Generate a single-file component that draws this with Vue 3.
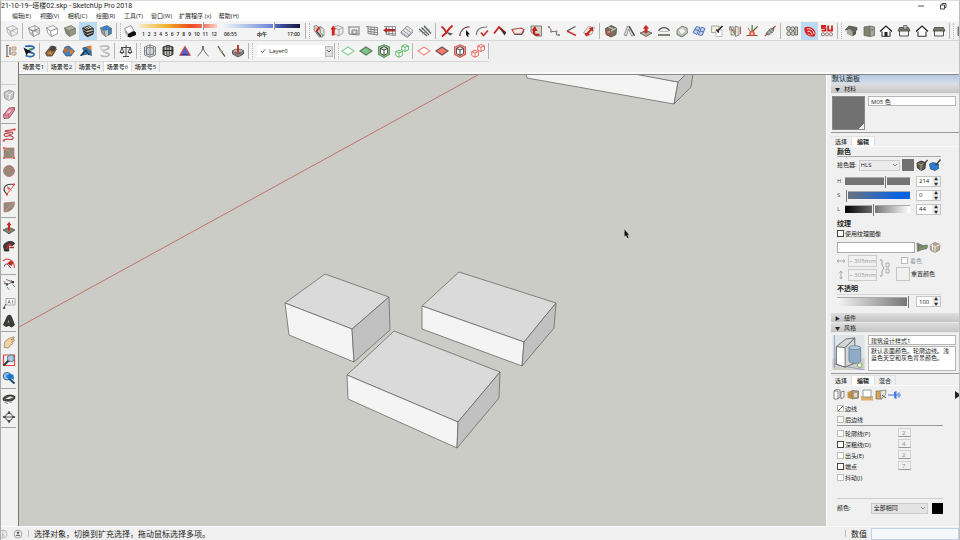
<script setup>
import { ref } from 'vue'

const cube = (top, left, right, line, extra = '') =>
  `<g stroke="${line}" stroke-width=".8" stroke-linejoin="round"><path d="M1.5 4 8 1.5 12.5 4.5 5.5 7z" fill="${top}"/><path d="M1.5 4 5.5 7 6.5 12.5 3 9.5z" fill="${left}"/><path d="M5.5 7 12.5 4.5 12.3 9.8 6.5 12.5z" fill="${right}"/></g>${extra}`
const hexBox = (edge, fill, halo) =>
  `<path d="M7 .8 12.4 3.2V10.4L7 13.2 1.6 10.4V3.2z" fill="${fill}" stroke="${halo}" stroke-width="1.2"/><path d="M7 2.6 10.6 4.4V9.4L7 11.4 3.4 9.4V4.4zM3.4 4.4 7 6.2 10.6 4.4M7 6.2V11.4" fill="#fff" stroke="${edge}"/>`
const diamond = (fill, line) =>
  `<path d="M1 7 7 3 13 7 7 11z" fill="${fill}" stroke="${line}" stroke-width="1.2"/>`
const twin = (c) =>
  `<g fill="#fff" stroke="${c}" stroke-width=".9"><path d="M10 .6 13.4 2V6L10 7.4 6.8 6V2zM6.8 2 10 3.4 13.4 2M10 3.4V7.4"/><path d="M4 6.2 7.4 7.6V11.6L4 13.2.8 11.6V7.6zM.8 7.6 4 9 7.4 7.6M4 9V13.2"/></g>`
const house = (roof, wall, door) =>
  `<path d="M3 6V12.3H11V6" fill="${wall}" stroke="#333" stroke-width="1.1"/><path d="M1 7.4 7 2 13 7.4" fill="${roof}" stroke="#222" stroke-width="1.3"/>${door ? '<path d="M5.5 8H8.5V12.5H5.5z" fill="#222"/>' : ''}`
const shed = (extra = '') =>
  `<path d="M2.5 6.5H11.5V12H2.5z" fill="#f4f4f0" stroke="#555"/><path d="M1 7 2.5 3.5H11.5L13 7z" fill="#77776c" stroke="#44443e" stroke-width=".8"/>${extra}`

const icons = {
  xray: cube('#f4f4f4', '#e8e8e8', '#eee', '#a8a8a8', '<path d="M3 9.5 8 7 12.3 9.8M8 1.5V7" fill="none" stroke="#bbb" stroke-width=".6"/>'),
  wire: cube('#f5f5f5', '#eee', '#f5f5f5', '#888', '<path d="M3 9.5 8 7 12.3 9.8M8 1.5V7M3 6 12 7" fill="none" stroke="#888" stroke-width=".7"/>'),
  hidden: cube('#fff', '#fff', '#fff', '#888'),
  shaded: cube('#aeb0a0', '#85877a', '#969886', '#777869'),
  textured: '<path d="M1.5 4 8 1.5 12.5 4.5 12.3 9.8 6.5 12.5 3 9.5z" fill="#d8d3bd" stroke="#3a3a36" stroke-width=".8"/><path d="M2 4.2 5.5 6.5 12.3 4.5M2.6 7 6 9.3 12.3 7.2M3.4 9.8 6.5 12 12 9.8" fill="none" stroke="#2b2b28" stroke-width="1.6"/><path d="M4 3.2 7.5 5.4M6 2.3 9.5 4.8" stroke="#4b4b44"/>',
  mono: cube('#2c88d8', '#9c9c90', '#3f7fb9', '#5f6f7c', '<path d="M5.5 7 9 5.8 9 11.3 6.5 12.5z" fill="#c9c3ac"/>'),
  shadow: '<path d="M1.5 4.5 8 1.5 11 7 5 10z" fill="#fff" stroke="#777" stroke-width=".8"/><path d="M5 10 11 7 13 8.5V11L7 13.4 4.4 12.4z" fill="#111"/><path d="M1.5 4.5 5 10 4.6 12 2 9z" fill="#aaa"/>',
  wallRed: '<path d="M2 2 5 1.5 11 10 10.5 13H7L2 6z" fill="#cfcabd" stroke="#777" stroke-width=".7"/><path d="M8 2 12 5V12L8.500 9z" fill="#e4e1d8" stroke="#777" stroke-width=".7"/><path d="M7.500 3 4 8" stroke="#c81f1b" stroke-width="1.8"/><path d="M5 8 9 12.500" stroke="#444" stroke-width="1.300"/>',
  pushWall: '<path d="M4 3 8 1.5 13 3.5V9L9 12 4 9.5z" fill="#ececec" stroke="#888" stroke-width=".7"/><path d="M9 5.5V12M4 4 9 5.5 13 3.5" fill="none" stroke="#888" stroke-width=".7"/><path d="M3.2 1.5 6 5.5H4.6V11.5H1.8V5.5H.4z" fill="#d92520"/>',
  frame: '<path d="M1 3H13M2 3V10L12 11V4M5 6H10V10H5z" fill="none" stroke="#777"/><path d="M6 7H9V9H6z" fill="#fff" stroke="#999" stroke-width=".6"/>',
  grid: '<path d="M1 2.5 12.5 3.5V11L3 9.5V2.5M3 5 12.5 6M3 7.4 12.5 8.6M6 3V10M9.3 3.2V10.6" fill="none" stroke="#777" stroke-width=".9"/>',
  redRows: '<path d="M1 2.5H12.5V11.5L3 10.5V2.5M3 9 12 10M6 3V11M9.5 3V11" fill="none" stroke="#888" stroke-width=".9"/><path d="M4 5H12V7.5H4z" fill="#b02a28"/><path d="M0 6.2 4 3.5V9z" fill="#b02a28"/>',
  stack: '<path d="M1 8 7 2 13 6.5 7.5 12.5z" fill="#e5e5e8" stroke="#888" stroke-width=".8"/><path d="M3 6.5 9 11M5 4.3 11 8.7" stroke="#9b9ba4"/><path d="M1 8V9.5L7.5 13.5 13 8" fill="none" stroke="#77779a" stroke-width=".8"/>',
  hatch: '<path d="M1 5 9 12M3.5 3.5 11 11M6 1.8 13 9.5" stroke="#5c6061" stroke-width="1.3"/><path d="M1.5 8 8 2.5M4 10.5 11.5 5" stroke="#8d9192"/>',
  cutRed: '<path d="M1.5 2.5C4 4 5.5 6.5 6.5 8.5 8 6 10 3.5 12.5 1.5M2 12.5 6.5 8.5" fill="none" stroke="#c8201c" stroke-width="1.8"/><path d="M6 8 13 9.5 10 11.5z" fill="#555"/>',
  arcDot: '<path d="M1.5 11C3 6.5 6 3 10.5 3" fill="none" stroke="#555" stroke-width="1.1"/><path d="M9 2H11.5V4H9zM1 10H3V12H1z" fill="#b77"/><path d="M8 6 12 10.3 10 10.5 10.6 12.8 9.6 13 8.8 11 8 12z" fill="#111"/>',
  arcCheck: '<path d="M1.5 11C1 6.5 4 3 12 3" fill="none" stroke="#777" stroke-width="1.1"/><path d="M6 8.5 8.5 11.5 13 6.5" fill="none" stroke="#c8302c" stroke-width="1.7"/>',
  roof: '<path d="M1 9.5 6 3 12.8 9" fill="none" stroke="#c8201c" stroke-width="1.8"/><path d="M6 3.5 11.5 11.5 13 9z" fill="#333"/><path d="M3 10 6 6 9 11z" fill="#f8f8f8"/>',
  slab: '<path d="M1 5.5 10 4 13 5.5 10.5 10H3.5z" fill="#f3e9e2" stroke="#b44741" stroke-width="1.2"/><path d="M3.5 10.5H11L13 7" fill="none" stroke="#555"/>',
  bendRed: '<path d="M2 2H12.5V12H7L2 8z" fill="#d6d2c4" stroke="#666" stroke-width=".8"/><path d="M10.5 10.5C5 12 4 9 5.5 5.5" fill="none" stroke="#c4201b" stroke-width="2.2"/><path d="M2.5 6.5 6 2 8.5 7z" fill="#c4201b"/>',
  steps: '<path d="M2 3 4 5.5V7.5H9.5V11H13" fill="none" stroke="#777"/><path d="M1 2H3V4H1zM3 6.4H5V8.4H3zM8.5 6.4H10.5V8.4H8.5zM11 10H13V12H11z" fill="#a88"/>',
  angle: '<path d="M11.5 2.5 3 7" stroke="#555" stroke-width="1.3"/><path d="M3 7 12 11.5" stroke="#c33" stroke-width="1.4"/>',
  foldRed: '<path d="M1.5 9 6 2.5 12.5 3.5 10 10 5 12z" fill="#e9dfd4" stroke="#999" stroke-width=".7"/><path d="M11 3 7 4 8 5.5 4.5 9 2.5 9 4 12.5 8 10.5 6.8 9.5 9.5 6.5 11 7.5z" fill="#c92a22"/>',
  brownBox: '<path d="M1.5 4.5 7 1.5 12.5 4 12 10.5 7 13 2 10.5z" fill="#777468" stroke="#44423b" stroke-width=".8"/><path d="M2 5 7 7V13L2 10.5z" fill="#a35650"/><path d="M4 2.5 10 5.5M7 7 12.5 4M3.5 8H6" stroke="#ded8c8"/>',
  blades: '<path d="M2 11 5.5 2 8 2.5 12.5 11.5 9.5 12 6.5 5 4.5 12z" fill="#d8d8d8" stroke="#777" stroke-width=".7"/><path d="M7 2.5 12.5 11.5" stroke="#444" stroke-width="1.3"/>',
  pushRed: '<path d="M1 9 7 6.5 13 9 7 12.5z" fill="#aeaa9b" stroke="#55534b" stroke-width=".8"/><path d="M7 1 10.2 4.5H8.5V9H5.5V4.5H3.8z" fill="#cc2822"/>',
  arch: '<path d="M1.5 7C4 2.5 10 2.5 12.5 7M1 11H13" fill="none" stroke="#5c5c55" stroke-width="1.4"/><path d="M3 7.5H11" stroke="#bbb"/>',
  rounded: '<path d="M2 6 7 2 12 4 12.5 9 7 13 2 10.5z" fill="#bfc4bd" stroke="#75776f" stroke-width=".9"/><path d="M4 6 8 4 10 8 6 10z" fill="#f4f4f0"/><path d="M3 11 7 12.6 11 10" stroke="#758c75" fill="none"/>',
  panels: '<path d="M1 8.5 4.5 2.5 8 3.5 4.8 10.5zM6.2 10.8 9.5 3.2 13 4.5 10 11.5z" fill="#bed1ee" stroke="#476aa7" stroke-width=".9"/><path d="M3 5.5 6.5 6.5M8 7 11.6 8" stroke="#476aa7"/>',
  copyPick: '<path d="M1.5 2H9V8.5H1.5z" fill="#ededdf" stroke="#888" stroke-width=".7"/><path d="M6 6H12V12.5H6z" fill="#fff" stroke="#aaa" stroke-width=".7"/><path d="M12.5 2 8 6.5M6.5 5.5 8.8 8.5" stroke="#222" stroke-width="1.6"/><path d="M9.5 4.5 8 6" stroke="#c33"/>',
  blocks: '<path d="M1.5 3H6V6H1.5zM7.5 2 11 3.5V11L7.5 12.5zM3 6.5H6.5V11H3z" fill="#e4e0d8" stroke="#7a776f" stroke-width=".8"/><path d="M12.5 2.5V10M2 2 6 9" stroke="#a6665e"/>',
  axes: '<path d="M7 8 7.2 1" stroke="#3a9c40" stroke-width="1.4"/><path d="M7 8 12.5 2.5M1.5 11.5H12.5" stroke="#7b4b3f" stroke-width="1.1"/><circle cx="7" cy="9.5" r="2.8" fill="#dc5a42"/><path d="M3 4 6 8.5" stroke="#c66"/><circle cx="7" cy="9.5" r="1.2" fill="#f3c9b7"/>',
  screw: '<path d="M2 12 12.5 2" stroke="#b34b47" stroke-width="1.2"/><path d="M3 9.5 7 5 11 4 10 8 5.5 11z" fill="#8f8f8b" stroke="#5a5a55" stroke-width=".8"/><path d="M5 7.5 8 10M7 5.5 10 8" stroke="#ddd" stroke-width=".7"/>',
  spheres: '<g fill="#cfcfcb" stroke="#66665f" stroke-width=".9"><circle cx="3.5" cy="4.5" r="2"/><circle cx="3.8" cy="9.5" r="2"/><circle cx="7.6" cy="4.8" r="2"/><circle cx="7.8" cy="9.5" r="2"/><path d="M10 3H12.5V11H10z"/></g>',
  rss: '<path d="M1.500 3.500C6 1 12.500 4.500 12.500 9.500L11.500 12.500 7.500 12.500C3 11.500 1 8 1.500 3.500z" fill="#d42320"/><path d="M4 5C8 4 11 7 11 10M4.5 7.3C7 7 9 8.5 9 11M5 9.5 7 11.5" fill="none" stroke="#fff" stroke-width=".9"/>',
  plugin: '<path d="M6 2H2V4.2H5.5V6.6H1.5M8.2 1.5V6.5H12V1.5" fill="none" stroke="#c9221e" stroke-width="1.8"/><g fill="#eee" stroke="#8f6d6a" stroke-width=".9"><circle cx="3" cy="10.3" r="1.6"/><circle cx="7" cy="10.3" r="1.6"/><circle cx="11" cy="10.3" r="1.6"/></g>',
  iso: '<path d="M1 6 5 2 12.8 3.5 13 6 8.5 7.5 6 5z" fill="#66665f" stroke="#444" stroke-width=".7"/><path d="M2.5 6.5 6 5 8.5 8V12.5L3 10z" fill="#a7a79d"/><path d="M8.5 8 12 6.5V10L8.5 12.5z" fill="#55554e"/>',
  cabinet: '<path d="M2 3 8 2V12.5L2 11.5z" fill="#7f8271"/><path d="M8 2 12.5 3V11.5L8 12.5z" fill="#a6a895"/><path d="M8 2V12.5M2 3 8 2 12.5 3V11.5L8 12.5 2 11.5z" fill="none" stroke="#66685b" stroke-width=".8"/><path d="M9.5 6H11" stroke="#444"/>',
  homeFront: house('#fff', '#fff', true),
  shedTop: shed('<path d="M6.5 1.5H10V5H6.5z" fill="#bbb" stroke="#555" stroke-width=".7"/>'),
  homePlain: house('#fff', '#fff', false),
  shed: shed(),
  layersEdge: '<path d="M2 2V12M5 3V11" stroke="#6b6b65" stroke-width="1.2"/><path d="M7 3H11V6H7zM7 8H11V11H7z" fill="#ded8cc" stroke="#b0805c" stroke-width=".7"/><path d="M1 1.5H4M1 12.5H4" stroke="#b06a3c"/>',
  swirl: '<path d="M3 2.500C7 1.500 12.500 2 12 4S5.500 5.500 6.500 7.500 13 8.500 12 11 6 12.500 3.500 11.500" fill="none" stroke="#2e6fae" stroke-width="1.800"/><path d="M1.500 3.500 10 8 6.500 8.500 4.500 11.500z" fill="#111"/><path d="M7 5.2 10.5 4.600" stroke="#57b04d" stroke-width="1.4"/>',
  woodA: '<path d="M1.5 9 7 2 12.5 5 8 12H3z" fill="#8d6746" stroke="#4d3a2b" stroke-width=".8"/><path d="M5 6.5 8.5 1.5 12.5 3 10 7z" fill="#444"/><path d="M2.5 9 7 7.5 8 11z" fill="#d58b3c"/>',
  woodB: '<path d="M1 8 3 3 7 2 12.5 7 9 12H4z" fill="#3a82c6" stroke="#355067" stroke-width=".7"/><path d="M2 4 5.5 3.5 6.5 7 3 10z" fill="#b9703b"/><path d="M7 6 10.5 5.5 11.5 9 8.5 10.5z" fill="#e07c2d"/>',
  woodC: '<path d="M3.500 4 11.5 2 12.5 11.5 9 10 1.500 11.500 5 7z" fill="#3075b6" stroke="#29485f" stroke-width=".7"/><path d="M7 3 12.5 1.5 12 7z" fill="#d88136"/><path d="M2 11.5 7 6 10 11" fill="none" stroke="#1f3442" stroke-width="1.2"/>',
  swirlGrey: '<path d="M3 2.500C7 1.500 12.500 2 12 4S5.500 5.500 6.500 7.500 13 8.500 12 11 6 12.500 3.500 11.500" fill="none" stroke="#b4b4b2" stroke-width="1.600"/><path d="M2 3 8.500 6.500 5 7.500z" fill="#cfcfcd"/>',
  scales: '<path d="M7 1V12M4 12.5H10M2 3.5H12M3 4 1 8.5H5zM11 4 9 8.5H13z" fill="none" stroke="#4a4a47" stroke-width="1"/><path d="M1 8.5H5L3 10zM9 8.5H13L11 10z" fill="#4a4a47"/>',
  globe: '<path d="M7 .8 12.5 3V11L7 13.2 1.5 11V3z" fill="#e2e4e8" stroke="#76787c" stroke-width=".9"/><circle cx="7" cy="7" r="4" fill="#d5d9df" stroke="#76787c" stroke-width=".9"/><path d="M7 1V13M3.5 3V11M10.5 3V11" stroke="#76787c" stroke-width=".8"/>',
  barrel: '<path d="M2 3 7 1.3 12 3V10.500L7 12.500 2 10.500z" fill="#666863" stroke="#2f302d" stroke-width=".9"/><path d="M4.4 3.5V11M7 4V12M9.6 3.5V11" stroke="#d5d5d0" stroke-width="1"/><path d="M2 6.5H12" stroke="#222"/>',
  prism: '<path d="M7 1.5 13 11.5H1z" fill="#d0483c"/><path d="M7 3.500 11 10.500H3z" fill="#5a5fd0"/><path d="M1 11.5H13L7 9.500z" fill="#343c9b"/>',
  peak: '<path d="M7 2C7 6 4.5 9.5 1.5 12M7 2C7 6 9.5 9.5 12.5 12M7 2V5" fill="none" stroke="#666" stroke-width="1"/>',
  thin: '<path d="M4 2 7 7 11 12.5" stroke="#5d5f50" stroke-width="1.3"/><path d="M6 6 8.5 8.5" stroke="#a2a48a" stroke-width="2"/>',
  plate: '<path d="M1.5 6.5H12.5V10L7 13 1.5 10z" fill="#858684" stroke="#494a48" stroke-width=".8"/><ellipse cx="7" cy="7" rx="5" ry="2" fill="#b3b3af" stroke="#555" stroke-width=".7"/><path d="M7 1V8" stroke="#b62c28" stroke-width="1.8"/><path d="M4.5 9H9.5" stroke="#b62c28"/>',
  dGreen: diamond('#fff', '#8bce92'),
  dGreenFill: diamond('#7fc487', '#5a7a5d'),
  bGreen: hexBox('#444', '#a6d8ab', '#549a5b'),
  tGreen: twin('#4fb35a'),
  dRed: diamond('#fff', '#f08b84'),
  dRedFill: diamond('#f07a70', '#77504e'),
  bRed: hexBox('#444', '#f7b0aa', '#cf5f56'),
  tRed: twin('#e8584e'),
  component: '<path d="M2 4.5 7 2 12 4 11 10.5 6.5 12.5 2.5 10z" fill="#c3c4c5" stroke="#8d8e90" stroke-width=".8"/><path d="M4 5 8 7 7 12M8 7 11 4" fill="none" stroke="#f4f4f4"/>',
  eraser: '<path d="M1.500 9 7 2 12.500 1.500 12.500 4.500 7 12 2 12.500z" fill="#f090a7" stroke="#76444f" stroke-width=".8"/><path d="M1.500 9 6.500 9 12.500 1.500M6.500 9V12" fill="none" stroke="#9f5262" stroke-width=".7"/><path d="M5 7.5 8 4.500 7.500 7" stroke="#fff" fill="none" stroke-width=".8"/>',
  squiggle: '<path d="M2 12.500C4.500 9 8 13 10.500 11S8.500 7 6 8 1.500 8 2.500 6 8.500 8 10.500 5.500 5 5 3.500 3.500 8.500 2.500 12 1.500" fill="none" stroke="#b53d3f" stroke-width="1.100"/><path d="M11.500 .5H13.500V2.500H11.500zM.8 11.500H2.800V13.500H.8z" fill="#e33"/>',
  rect: '<path d="M2 2H12V12H2z" fill="#8d8c7d" stroke="#c17d76" stroke-width=".8"/><path d="M2.5 3.5C7 3.5 9.5 6.5 11 11.5" stroke="#d58b82" fill="none"/><path d="M1 1H3V3H1zM11 11H13V13H11zM1 11H3V13H1z" fill="#f06257"/>',
  circle: '<circle cx="7" cy="7" r="5.4" fill="#8d8c7d" stroke="#b56b61" stroke-width=".9"/><path d="M7 7 10.5 4" stroke="#e2685f"/><circle cx="7" cy="7" r="1.2" fill="#ef6a60"/>',
  arc: '<path d="M5.500 12.500C-.5 8 1.500 1 12 2.500" fill="none" stroke="#444" stroke-width="1.200"/><path d="M5 12 12 3M5 4.500 9.500 8.500" stroke="#e44b4b"/><path d="M11 1.500H13V3.500H11zM4 11.500H6V13.500H4zM5.500 5.500H7.500V7.500H5.500z" fill="#e44"/>',
  pie: '<path d="M2 3 12.5 2C12.5 8.5 8 12 2 12z" fill="#8d8c7d" stroke="#b8756b" stroke-width=".8"/><path d="M2 12 12 2.5" stroke="#de8a80"/>',
  pushpull: '<path d="M1 9 7 6.2 13 9 7 12.8z" fill="#85836f" stroke="#4d4c40" stroke-width=".8"/><path d="M7 .8 9.6 4.2H8V9.5H6V4.2H4.4z" fill="#cb2923"/>',
  follow: '<path d="M1.5 7C3 1.5 12 1 12.5 5L9.5 7C8.5 5 6.5 6 6.5 8L6.8 12 2.5 12z" fill="#3d3c38" stroke="#1f1e1c" stroke-width=".8"/><path d="M5 10C4.500 7 7 5 10 5.500M7.500 8.500H12" fill="none" stroke="#c82c29" stroke-width="1.600"/>',
  offset: '<path d="M1 4C4 .5 12.500 2 12.500 11" fill="none" stroke="#e55753" stroke-width="1.200"/><path d="M2.5 9.500C2.500 6 6 6 8.500 11" fill="none" stroke="#444"/><path d="M5 6.500 8.500 3.500 11.500 5.500 9.500 9z" fill="#c62723"/>',
  tape: '<path d="M1.5 3 5 6.5M4 1.5 11 4 9 2M5 6.5 10.500 4M2 5.500 6 6" stroke="#777" fill="none" stroke-width="1"/><path d="M9.5 3H12V5.3H9.5zM3.8 5.5H6V7.6H3.8z" fill="#444"/><path d="M5 9 7.500 12M10.500 6.500 13 9" stroke="#69a365"/>',
  label: '<path d="M4 2.5H13V9H4z" fill="#f8f8f8" stroke="#999" stroke-width=".8"/><path d="M6 7.5 7.2 4.3 8.4 7.5M6.4 6.4H8M10.5 4.2V7.6" fill="none" stroke="#666" stroke-width=".7"/><path d="M4 8 2 11V13" stroke="#555" fill="none"/><circle cx="2.3" cy="12" r="1.1" fill="#444"/>',
  text3d: '<path d="M5.500 2 8 1 9.500 3 12.500 11 9.500 13 7 11.500 4 12.500 1.500 11z" fill="#3d3c38" stroke="#222" stroke-width=".8"/><path d="M5.500 9 6.500 5.500 7.500 8.500z" fill="#999"/>',
  pan: '<path d="M2 12.5 3 6.5 7 3.5 12 1.8 12.3 3 9 5 12 4.5 12.5 6 9.5 7 11 8.5 8 10.5 6.5 13z" fill="#f1d3a4" stroke="#a5845c" stroke-width=".8"/>',
  zoom: '<path d="M1.5 2H12.5V12.5H1.5z" fill="none" stroke="#e7443f" stroke-width="1.2"/><circle cx="8.8" cy="5.3" r="3.5" fill="#a9c7dd" stroke="#557995"/><path d="M6.4 7.8 1.6 12.6" stroke="#333" stroke-width="2"/>',
  zoomPrev: '<circle cx="5" cy="5.2" r="3.8" fill="#8cbbe0" stroke="#456d8a"/><path d="M7 7.5 12.5 12.5" stroke="#28445c" stroke-width="2"/><path d="M4 5 8 2.5 11.5 4 12 9 9.5 7.5 7 8.5z" fill="#1976d0"/>',
  walk: '<path d="M1 6.500C3 3 9 2 13 4.500L12.500 7C10 9.500 5 9.500 1.500 8.500z" fill="#4a4945" stroke="#222" stroke-width=".8"/><path d="M3 6.800 8 4.600 11.500 5.300 7 7z" fill="#f2f2ee"/><path d="M2.500 10.500 6 11.500M6.500 9.500 10 10.500" stroke="#888"/>',
  section: '<circle cx="7" cy="7" r="3.6" fill="none" stroke="#555"/><path d="M1 7H13" stroke="#555"/><path d="M7 .8 9 3.5H5zM7 13.2 9 10.5H5zM13.5 7 11.2 5.5V8.5zM.5 7 2.8 5.5V8.5z" fill="#444"/>',
  paintBox: '<path d="M2 5 6 3 10.500 4.500 10 10.500 6.500 12.5 2.5 10z" fill="#5d5a4a" stroke="#222" stroke-width=".8"/><path d="M3 5.5 6 7 10 5M6 7V12" stroke="#a8a48b" fill="none"/><path d="M8.500 7 12.500 2" stroke="#444" stroke-width="1.300"/>',
  paintBlue: '<path d="M1.500 6 5 4.500 10.500 6V10.500L7 12.500 2.500 11z" fill="#2a7dd0" stroke="#21557f" stroke-width=".8"/><path d="M7.5 7.5 12.5 1.5" stroke="#444" stroke-width="1.5"/>',
  browse: '<path d="M2 3 8 5.5 12.5 5 12 8.5 6 10 2.5 11.5z" fill="#7c7f6f" stroke="#666" stroke-width=".6"/><path d="M4 9.5 13 6.5" stroke="#72a65e" stroke-width="1.3"/>',
  editTex: '<path d="M2 5 7 2.5 12 4.5 11.5 10 7 12.5 2.5 10z" fill="#b3a896" stroke="#8b8474" stroke-width=".8"/><path d="M2 5 7 7 12 4.5M7 7V12.5M4.5 4V10.5" fill="none" stroke="#ece6da"/>',
  stEdge: '<path d="M2 3H6V11H2zM2 3 4 1.5 8 2V9L6 11M9 4 12 3V9L9 11z" fill="#fff" stroke="#666" stroke-width=".8"/>',
  stFace: '<path d="M1.5 4 6 2.5V11L1.5 10z" fill="#c98f45"/><path d="M6 2.5 12.5 3V10L6 11z" fill="#a9a18c" stroke="#7e786b" stroke-width=".8"/><path d="M8 5H11V9H8z" fill="#ecd9b4"/>',
  stBack: '<path d="M1 8H13V12.5H1z" fill="#e0b06a"/><path d="M3 2H11V9H3z" fill="#fff" stroke="#7d8790" stroke-width=".8"/>',
  stMark: '<path d="M2 3H8V11H2z" fill="#d5a45d" stroke="#8f7a58" stroke-width=".8"/><path d="M6 3 12 2 11.5 7 7 11z" fill="#ece4d2" stroke="#777" stroke-width=".7"/><path d="M8 7 12 10" stroke="#555"/>',
  stModel: '<path d="M0 7H13" stroke="#6c8fe0" stroke-width="1.3"/><path d="M6 4 8.500 3V11L6 10z" fill="#4b79e0"/><path d="M9.500 4.500H12V9.500H9.500z" fill="#86a6ec"/>',
  more: '<path d="M4 3 10 7 4 11z" fill="#222"/>',
  info: '<circle cx="7" cy="7" r="4.6" fill="none" stroke="#aaa"/><path d="M7 6.5V10M7 4V5.2" stroke="#888" stroke-width="1.2"/>',
  user: '<circle cx="7" cy="7" r="4.6" fill="none" stroke="#999"/><circle cx="7" cy="5.5" r="1.5" fill="#666"/><path d="M4 9.3C5 7.5 9 7.5 10 9.3z" fill="#666"/>'
}

const g = (w, names, active = '') => ({ kind: 'group', w, names: names.split(' '), active })
const sep = { kind: 'sep' }
const grip = { kind: 'grip' }
const rowOne = [
  g(18, 'xray'), sep, g(90, 'wire hidden shaded textured mono', 'textured'), sep, grip, g(18, 'shadow'),
  { kind: 'date' }, { kind: 'time' }, sep, grip,
  g(124, 'wallRed pushWall frame grid redRows stack hatch'), sep,
  g(160, 'cutRed arcDot arcCheck roof slab bendRed steps angle foldRed'), sep,
  g(177, 'brownBox blades pushRed arch rounded panels copyPick blocks axes screw'), sep,
  g(53, 'spheres rss plugin', 'rss'), sep, grip,
  g(106, 'iso cabinet homeFront shedTop homePlain shed'), sep, grip, g(18, 'cabinet')
]
const rowTwo = [
  g(35, 'layersEdge swirl'), sep, g(71, 'woodA woodB woodC swirlGrey'), sep, g(18, 'scales'), sep, grip,
  g(106, 'globe barrel prism peak thin plate'), sep, grip, { kind: 'layer' }, sep, grip,
  g(72, 'dGreen dGreenFill bGreen tGreen'), sep, g(72, 'dRed dRedFill bRed tRed'), sep
]
const sideGroups = [
  ['component', 'eraser'], ['squiggle', 'rect', 'circle', 'arc', 'pie'], ['pushpull', 'follow', 'offset'],
  ['tape', 'label', 'text3d'], ['pan', 'zoom', 'zoomPrev'], ['walk', 'section']
]
const menus = ['编辑(E)', '视图(V)', '相机(C)', '绘图(R)', '工具(T)', '窗口(W)', '扩展程序 (x)', '帮助(H)']
const scenes = ['场景号1', '场景号2', '场景号4', '场景号6', '场景号5']
const scene = ref('场景号6')
const channels = ref([
  { id: 'H', max: 340, value: 214, text: '214' },
  { id: 'S', max: 100, value: 0, text: '0' },
  { id: 'L', max: 100, value: 44, text: '44' }
])
const edgeOptions = ref([
  { name: '轮廓线(P)', value: '2', strong: false },
  { name: '深粗线(D)', value: '4', strong: true },
  { name: '出头(E)', value: '2', strong: false },
  { name: '端点', value: '7', strong: true },
  { name: '抖动(J)', value: '', strong: false }
])
const styleIcons = ['stEdge', 'stFace', 'stBack', 'stMark', 'stModel']
const description = ref('默认表面颜色。轮廓边线。浅蓝色天空和灰色背景颜色。')
</script>

<template>
  <div class="window">
    <header class="titlebar">
      <h1>21-10-19--塔楼02.skp - SketchUp Pro 2018</h1>
      <div class="winbtns">
        <button aria-label="最小化"><svg viewBox="0 0 8 8"><path d="M1 4H7" stroke="#555" /></svg></button>
        <button aria-label="还原"><svg viewBox="0 0 8 8"><path d="M1.5 3H5.5V7H1.5zM3 3V1.5H7V5.5H5.5" fill="none" stroke="#444" /></svg></button>
      </div>
    </header>
    <nav class="menubar">
      <button v-for="m in menus" :key="m">{{ m }}</button>
    </nav>

    <div v-for="(row, r) in [rowOne, rowTwo]" :key="r" class="toolrow">
      <div class="strip">
        <template v-for="(item, i) in row" :key="i">
          <span v-if="item.kind === 'sep'" class="sep"></span>
          <span v-else-if="item.kind === 'grip'" class="grip"></span>
          <div v-else-if="item.kind === 'group'" class="group" :style="{ width: item.w + 'px' }">
            <button v-for="n in item.names" :key="n" :aria-label="n" :class="{ on: item.active === n }">
              <svg class="ico" viewBox="0 0 14 14" fill="none" v-html="icons[n]"></svg>
            </button>
          </div>
          <div v-else-if="item.kind === 'date'" class="scale date">
            <input type="range" min="0" max="100" value="83" aria-label="日期">
            <div class="ticks"><span v-for="n in 12" :key="n">{{ n }}</span></div>
          </div>
          <div v-else-if="item.kind === 'time'" class="scale time">
            <input type="range" min="0" max="100" value="66" aria-label="时间">
            <div class="ticks"><span>06:55</span><span>中午</span><span>17:00</span></div>
          </div>
          <div v-else class="layer">
            <svg viewBox="0 0 6 6"><path d="M1 3 2.5 4.5 5 1.5" fill="none" stroke="#555" /></svg>
            <select aria-label="图层"><option>Layer0</option></select>
            <span class="drop"><svg viewBox="0 0 6 6"><path d="M1 2 3 4 5 2" fill="none" stroke="#666" /></svg></span>
          </div>
        </template>
      </div>
    </div>

    <div class="body">
      <aside class="side">
        <div v-for="(grp, i) in sideGroups" :key="i" class="sidegroup">
          <button v-for="n in grp" :key="n" :aria-label="n">
            <svg class="ico" viewBox="0 0 14 14" fill="none" v-html="icons[n]"></svg>
          </button>
        </div>
      </aside>

      <div class="content">
        <div class="scenes">
          <button v-for="s in scenes" :key="s" :class="{ on: s === scene }" @click="scene = s">{{ s }}</button>
        </div>
        <div class="work">
          <main class="canvas">
            <svg viewBox="19 75 807 451" preserveAspectRatio="xMinYMin slice">
              <path d="M19 327 478 75" stroke="#c25a58" stroke-width=".8" />
              <g stroke="#6a6a68" stroke-width=".8" stroke-linejoin="round">
                <path d="M526 74 637 74 678 82 674 104 527 78z" fill="#f4f4f4" />
                <path d="M634 74 686 74 678 82z" fill="#dadada" />
                <path d="M678 82 686 74 693 74 691 87 674 104z" fill="#c2c2c1" />
                <path d="M325 274 389 297 352 329 285 303z" fill="#dadada" />
                <path d="M285 303 352 329 354 362 289 335z" fill="#f4f4f4" />
                <path d="M352 329 389 297 390 330 354 362z" fill="#c1c1c1" />
                <path d="M459 272 556 303 524 342 422 306z" fill="#dadada" />
                <path d="M422 306 524 342 522 366 422 329z" fill="#f4f4f4" />
                <path d="M524 342 556 303 554 328 522 366z" fill="#c1c1c1" />
                <path d="M394 331 500 372 458 422 347 375z" fill="#dadada" />
                <path d="M347 375 458 422 457 448 348 399z" fill="#f4f4f4" />
                <path d="M458 422 500 372 499 398 457 448z" fill="#c1c1c1" />
              </g>
              <path d="M624.5 229.5V236.5L626 235.3 627.4 238 628.6 237.4 627.3 234.8H629z" fill="#111" />
            </svg>
          </main>

          <aside class="panel">
            <h2 class="tray">默认面板</h2>
            <button class="fold"><i>▼</i>材料</button>
            <section class="headrow">
              <div class="preview"></div>
              <input class="name" value="M05 色" aria-label="材料名称">
            </section>
            <div class="tabs"><button>选择</button><button class="on">编辑</button></div>

            <section class="edit">
              <h3 class="ruled">颜色</h3>
              <div class="picker">
                <label for="picker">拾色器:</label>
                <span class="selectbox"><select id="picker"><option>HLS</option></select><svg viewBox="0 0 6 6"><path d="M1 2 3 4 5 2" fill="none" stroke="#777" stroke-width=".8" /></svg></span>
                <button class="chip" aria-label="当前颜色"></button>
                <button v-for="n in ['paintBox', 'paintBlue']" :key="n" :aria-label="n"><svg class="ico" viewBox="0 0 14 14" fill="none" v-html="icons[n]"></svg></button>
              </div>
              <div v-for="c in channels" :key="c.id" class="channel">
                <label :for="'ch' + c.id">{{ c.id }}</label>
                <input :id="'ch' + c.id" v-model="c.value" type="range" min="0" :max="c.max" :class="'track-' + c.id">
                <span class="spin"><input v-model="c.text" :aria-label="c.id + ' 值'"><span class="arrows"><i>▲</i><i>▼</i></span></span>
              </div>

              <h3>纹理</h3>
              <label class="check strong"><input type="checkbox">使用纹理图像</label>
              <div class="texrow">
                <input aria-label="纹理文件">
                <button v-for="n in ['browse', 'editTex']" :key="n" :aria-label="n"><svg class="ico" viewBox="0 0 14 14" fill="none" v-html="icons[n]"></svg></button>
              </div>
              <div class="dims">
                <div class="sizes">
                  <label><svg viewBox="0 0 8 8"><path d="M0 4H8M2 2.5 0 4 2 5.5M6 2.5 8 4 6 5.5" fill="none" stroke="#aaa" /></svg><input value="~ 305mm" disabled></label>
                  <label><svg viewBox="0 0 8 8"><path d="M4 0V8M2.5 2 4 0 5.5 2M2.5 6 4 8 5.5 6" fill="none" stroke="#aaa" /></svg><input value="~ 305mm" disabled></label>
                </div>
                <svg class="chain" viewBox="0 0 12 18"><path d="M1 1H3V6L5 9 3 12V17H1" fill="none" stroke="#999" /><path d="M7 4H10V8H7zM7 10H10V14H7z" fill="none" stroke="#aaa" /></svg>
                <div class="tint">
                  <label class="check dim"><input type="checkbox" disabled>着色</label>
                  <div class="reset"><button aria-label="重置"></button><span>重置颜色</span></div>
                </div>
              </div>
              <h3>不透明</h3>
              <div class="opacity">
                <input type="range" min="0" max="100" value="100" aria-label="不透明度">
                <span class="spin"><input value="100" aria-label="不透明度值"><span class="arrows"><i>▲</i><i>▼</i></span></span>
              </div>
            </section>

            <button class="fold"><i>▶</i>组件</button>
            <button class="fold"><i>▼</i>风格</button>
            <section class="headrow">
              <svg class="thumb" viewBox="0 0 33 36"><path d="M0 0H33V36H0z" fill="#dfe5e6" /><path d="M0 24H33V36H0z" fill="#cfd1c9" /><path d="M2 0V34M2 30 33 36" stroke="#7b86c9" stroke-width=".7" /><path d="M4 12 14 4 23 3 23 29 13 33 4 30z" fill="#d4d6d6" stroke="#555" stroke-width=".8" /><path d="M4 12 13 13 13 33 4 30z" fill="#fff" stroke="#555" stroke-width=".8" /><path d="M13 13 23 3" stroke="#555" /><path d="M17 13V27C19 30 27 30 29 27V13z" fill="#8fabc6" stroke="#5f7d99" stroke-width=".8" /><ellipse cx="23" cy="13" rx="6" ry="2" fill="#b4cadd" stroke="#5f7d99" stroke-width=".8" /><circle cx="28" cy="31" r="2.4" fill="#eef5e8" stroke="#71a05a" /></svg>
              <div class="names">
                <input class="name" value="建筑设计样式1" aria-label="风格名称">
                <textarea v-model="description" aria-label="风格说明"></textarea>
              </div>
            </section>
            <div class="tabs near"><button>选择</button><button class="on">编辑</button><button>混合</button></div>

            <section class="edges">
              <div class="styleicons">
                <button v-for="n in styleIcons" :key="n" :aria-label="n"><svg class="ico" viewBox="0 0 14 14" fill="none" v-html="icons[n]"></svg></button>
                <button class="more" aria-label="更多"><svg class="ico" viewBox="0 0 14 14" v-html="icons.more"></svg></button>
              </div>
              <label class="check"><input type="checkbox" checked>边线</label>
              <label class="check"><input type="checkbox">后边线</label>
              <hr>
              <div v-for="o in edgeOptions" :key="o.name" class="option">
                <label class="check" :class="{ strong: o.strong }"><input type="checkbox">{{ o.name }}</label>
                <input v-if="o.value" class="num" :value="o.value" :aria-label="o.name + ' 值'" disabled>
              </div>
              <hr class="low">
              <div class="edgecolor">
                <label for="edgecolor">颜色:</label>
                <span class="selectbox filled"><select id="edgecolor"><option>全部相同</option></select><svg viewBox="0 0 6 6"><path d="M1 2 3 4 5 2" fill="none" stroke="#777" stroke-width=".8" /></svg></span>
                <button class="chip black" aria-label="边线颜色"></button>
              </div>
            </section>
          </aside>
        </div>
      </div>
    </div>

    <footer class="status">
      <svg class="ico" viewBox="0 0 14 14" fill="none" v-html="icons.info"></svg>
      <svg class="ico" viewBox="0 0 14 14" fill="none" v-html="icons.user"></svg>
      <span class="bar"></span>
      <p>选择对象，切换到扩充选择，拖动鼠标选择多项。</p>
      <span class="bar"></span>
      <label for="measure">数值</label>
      <input id="measure">
    </footer>
  </div>
</template>

<style>
body { margin: 0; overflow: hidden; }
</style>

<style scoped>
.window { box-sizing: border-box; height: 100vh; display: flex; flex-direction: column; background: #f0f0f0; border-left: 1px solid #a9a9a9; border-top: 1px solid #dcdcdc; border-right: 1px solid #c0c0c0; font: 6px/8px "Open Sans", "Noto Sans CJK SC", sans-serif; color: #222; overflow: hidden; }
.window * { box-sizing: border-box; }
button, input, select, textarea { font: inherit; color: inherit; margin: 0; padding: 0; border: 0; border-radius: 0; background: none; outline: none; min-width: 0; }
button { display: flex; align-items: center; justify-content: center; }
h1, h2, h3, p { margin: 0; font-weight: 400; }
i { font-style: normal; }
svg { display: block; flex: none; }
.ico { width: 14px; height: 14px; }

.titlebar { display: flex; justify-content: space-between; height: 10px; flex: none; background: #fff; }
.titlebar h1 { font-family: Roboto, "Noto Sans CJK SC", sans-serif; font-size: 7px; line-height: 10px; white-space: nowrap; }
.winbtns { display: flex; gap: 14px; padding-right: 12px; }
.winbtns svg { width: 8px; height: 8px; }
.menubar { display: flex; gap: 7px; height: 10px; flex: none; padding: 1px 0 0 10px; background: #fff; }
.menubar button { min-width: 21px; white-space: nowrap; line-height: 9px; }

.toolrow { display: flex; flex: none; height: 20px; background: #efefef; }
.toolrow + .toolrow { height: 21px; }
.strip { display: flex; align-items: center; flex: none; padding-left: 2px; border-bottom: 1px solid #d6d6d6; background: #f3f3f3; }
.group { display: flex; height: 18px; flex: none; }
.group button { flex: 1; overflow: visible; }
.group .on { background: #bddaf3; }
.sep { width: 2px; height: 16px; flex: none; border-right: 1px solid #b4b4b4; }
.sep + .group { margin-left: 2px; }
.grip { width: 3px; height: 16px; flex: none; margin-left: 1px; border-right: 1px dotted #bbb; }
.scale { height: 14px; flex: none; font-size: 5px; line-height: 6px; font-weight: 600; }
.scale input { appearance: none; display: block; height: 4px; width: 100%; margin-bottom: 3px; }
.date { width: 78px; margin-right: 5px; }
.date input { background: linear-gradient(90deg, #f6ecc4, #f1b32b 35%, #ee4b22 66%, #ee6a52 80%, #f4d2cb); }
.time { width: 76px; margin: 0 4px 0 2px; }
.time input { background: linear-gradient(90deg, #eef3f8, #a5bbe4 35%, #6d86d6 62%, #3b4c9c 75%, #14183a); }
.scale input::-webkit-slider-thumb { appearance: none; width: 2px; height: 8px; background: #fff; border-right: 1px solid #999; }
.ticks { display: flex; justify-content: space-between; padding: 0 0 0 3px; }
.time .ticks { padding: 0; }
.layer { display: flex; align-items: center; width: 76px; height: 12px; margin-left: 4px; flex: none; background: #fff; }
.layer svg { width: 6px; height: 6px; margin: 0 3px; }
.layer select { appearance: none; flex: 1; }
.layer .drop { width: 8px; height: 11px; display: flex; align-items: center; background: #dedede; border: 1px solid #bbb; }
.layer .drop svg { margin: 0; }

.body { display: flex; flex: 1; min-height: 0; }
.side { width: 18px; flex: none; padding-top: 22px; border-right: 1px solid #77777a; background: #f1f1f1; }
.sidegroup { width: 15px; padding-bottom: 1px; margin-bottom: 1px; border-bottom: 1px solid #a5a5a5; }
.sidegroup:first-child { border-top: 1px solid #ccc; padding: 1px 0; margin-bottom: 2px; }
.sidegroup button { width: 15px; height: 18px; }
.content { display: flex; flex-direction: column; flex: 1; min-width: 0; }
.scenes { display: flex; height: 12px; flex: none; padding-left: 1px; border-bottom: 2px solid #fafafa; box-shadow: 0 1px #8a8a8d; font-weight: 500; margin-bottom: 1px; }
.scenes button { width: 28px; height: 10px; border-right: 1px solid #d8d8d8; white-space: nowrap; }
.scenes .on { background: #fff; }
.work { display: flex; flex: 1; min-height: 0; }
.canvas { flex: 1; min-width: 0; background: #cbccc6; overflow: hidden; }
.canvas svg { width: 100%; height: 100%; }

.panel { width: 133px; flex: none; padding-left: 4px; border-left: 1px solid #fff; background: #f0f0f0; overflow: hidden; }
.tray { height: 9px; padding-left: 1px; font-size: 7px; line-height: 8px; background: linear-gradient(#b5c8dd, #d5e0ec); }
.fold { width: 100%; height: 10px; justify-content: flex-start; gap: 4px; padding-left: 4px; background: linear-gradient(#dedede, #c4c4c4); border-bottom: 1px solid #e8e8e8; }
.fold i { font-size: 5px; width: 5px; }
.headrow { display: flex; gap: 3px; padding: 2px 3px 2px 1px; border-bottom: 1px solid #999; }
.preview { width: 33px; height: 34px; flex: none; background: linear-gradient(135deg, #717171 92%, #eee 92%); border: 1px solid #888; }
.name { width: 100%; height: 10px; padding-left: 2px; background: #fff; border: 1px solid #b5b5b5; }
.thumb { width: 33px; height: 35px; }
.names { flex: 1; min-width: 0; }
textarea { display: block; width: 100%; height: 25px; margin-top: 1px; padding: 1px 2px; resize: none; overflow: hidden; line-height: 7px; background: #fff; border: 1px solid #b5b5b5; }
.names .name { display: block; }
.tabs { display: flex; height: 11px; margin-top: 3px; flex: none; border-bottom: 1px solid #fafafa; }
.tabs.near { margin-top: 1px; }
.tabs button { width: 21px; height: 10px; border-right: 1px solid #ddd; border-top: 1px solid #e2e2e2; }
.tabs .on { width: 23px; background: #fff; font-weight: 600; }

.edit { padding: 1px 18px 0 6px; height: 166px; }
h3 { font-size: 7px; line-height: 8px; font-weight: 700; }
.ruled { border-bottom: 1px solid #aaa; }
.picker { display: flex; align-items: center; height: 16px; gap: 2px; margin-bottom: 1px; }
.picker label { width: 21px; white-space: nowrap; }
.picker button { width: 12px; }
.selectbox { display: flex; align-items: center; width: 44px; height: 11px; background: #ececec; border: 1px solid #ccc; }
.selectbox select { appearance: none; flex: 1; padding-left: 1px; }
.selectbox svg { width: 6px; height: 6px; margin-right: 1px; }
.picker .chip { background: #717171; height: 12px; margin: 0 1px 0 0; flex: none; }
.channel { display: flex; align-items: center; height: 14px; }
.channel label { width: 8px; color: #555; }
.channel input[type=range], .opacity input[type=range] { appearance: none; flex: 1; height: 8px; margin-right: 6px; border-top: 1px solid #aaa; }
.track-H { background: #747474; }
.track-S { background: linear-gradient(90deg, #6f7479, #0a63e0 80%); }
.track-L { background: linear-gradient(90deg, #000, #808080 50%, #fff); }
.channel input::-webkit-slider-thumb, .opacity input::-webkit-slider-thumb { appearance: none; width: 3px; height: 12px; background: #777; border: solid #f0f0f0; border-width: 0 1px; }
.spin { display: flex; width: 25px; height: 11px; border: 1px solid #c5c5c5; background: #fff; flex: none; }
.spin input { width: 15px; padding-left: 2px; }
.arrows { flex: 1; display: flex; flex-direction: column; align-items: center; background: #eee; }
.arrows i { font-size: 4px; line-height: 5px; height: 5px; }
.channel + h3 { margin-top: 4px; }
.check { display: flex; align-items: center; gap: 1px; height: 11px; white-space: nowrap; }
.check input { appearance: none; width: 7px; height: 7px; flex: none; background: #fff; border: 1px solid #bbb; }
.check.strong input { border-color: #444; }
.check input:checked { background: linear-gradient(135deg, #fff 45%, #777 45%, #777 60%, #fff 60%); }
.dim { color: #999; gap: 2px; }
.texrow { display: flex; align-items: center; height: 14px; margin-top: 1px; }
.texrow input { flex: 1; height: 11px; background: #fff; border: 1px solid #aaa; }
.texrow button { width: 13px; }
.dims { display: flex; align-items: center; height: 28px; margin-bottom: 3px; }
.sizes { display: flex; flex-direction: column; gap: 2px; }
.sizes label { display: flex; align-items: center; gap: 3px; }
.sizes svg { width: 8px; height: 8px; }
.sizes input { width: 29px; height: 12px; text-align: center; color: #999; border: 1px solid #ccc; }
.chain { width: 12px; height: 18px; margin: 0 5px 0 2px; }
.tint { display: flex; flex-direction: column; gap: 1px; }
.tint .check { padding-left: 5px; }
.reset { display: flex; align-items: center; gap: 1px; white-space: nowrap; }
.reset button { width: 14px; height: 14px; border: 1px solid #c5c5c5; flex: none; }
.opacity { display: flex; align-items: center; height: 14px; margin-top: 1px; border-top: 1px solid #d5d5d5; }
.opacity input[type=range] { background: linear-gradient(90deg, #f4f4f4, #707070); height: 9px; }
.opacity .spin { height: 11px; }

.edges { padding: 0 16px 0 6px; }
.styleicons { display: flex; height: 17px; margin: 0 -22px 0 -5px; }
.styleicons button { width: 14px; flex: none; }
.styleicons .more { margin-left: auto; }
hr { border: 0; border-top: 1px solid #999; margin: 0 0 2px; }
.option { display: flex; justify-content: space-between; height: 11px; padding-right: 32px; }
.num { width: 13px; height: 9px; padding-left: 3px; color: #888; border: 1px solid #d2d2d2; border-bottom-color: #999; }
.low { margin-top: 15px; border-color: #ccc; }
.edgecolor { display: flex; align-items: center; gap: 4px; height: 14px; }
.edgecolor label { width: 30px; }
.filled { width: 58px; background: #e3e3e3; }
.filled select { padding-left: 2px; }
.black { width: 11px; height: 11px; background: #000; }

.status { display: flex; align-items: center; height: 14px; flex: none; border-top: 1px solid #fafafa; font-size: 8px; line-height: 12px; }
.status .ico { width: 12px; height: 12px; margin-left: -4px; margin-right: 7px; }
.bar { width: 1px; height: 7px; background: #bbb; margin-right: 5px; }
.ico + .bar { margin-left: -3px; }
.status p { flex: 1; white-space: nowrap; }
.status input { width: 88px; height: 12px; margin-left: 4px; border: 1px solid #c3d2e2; background: #f5f8fb; }
</style>
